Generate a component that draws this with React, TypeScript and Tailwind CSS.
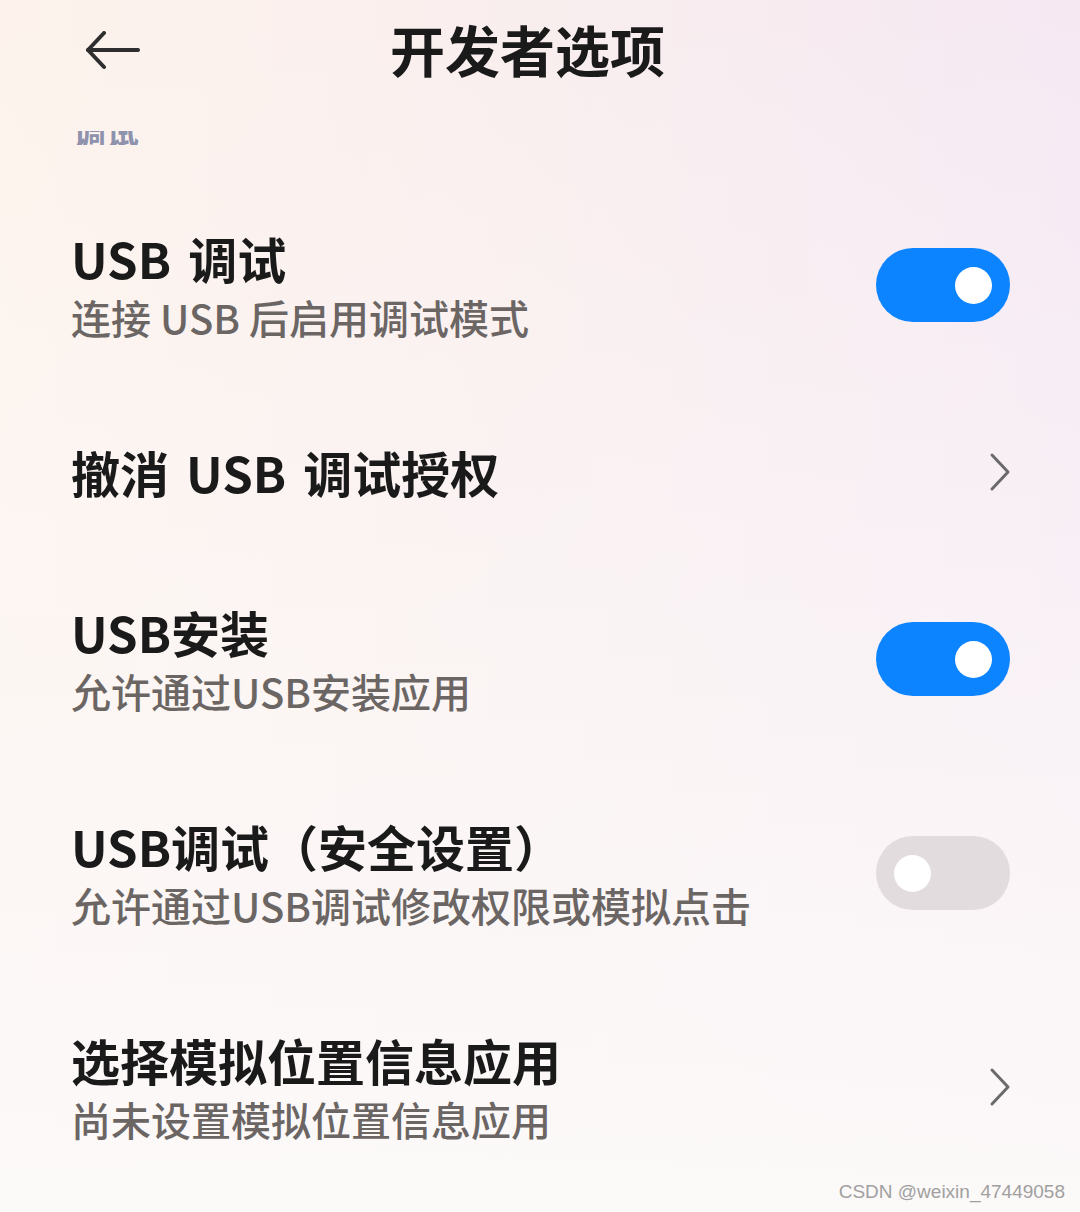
import React from "react";

const font = { fontFamily: '"Noto Sans CJK SC", "Noto Sans", sans-serif' };

function Toggle({ on }: { on: boolean }) {
  return (
    <div
      className={
        "flex h-[74px] w-[134px] shrink-0 items-center rounded-full px-[18px] " +
        (on ? "justify-end bg-[#0d84ff]" : "justify-start bg-[#e3dcdf]")
      }
    >
      <div className="h-[37px] w-[37px] rounded-full bg-white" />
    </div>
  );
}

function Chevron() {
  return (
    <svg width="24" height="40" viewBox="0 0 24 40" className="-mr-[1px] shrink-0">
      <path d="M5 3 L21 20 L5 37" fill="none" stroke="#6a6a6a" strokeWidth="3" strokeLinecap="round" strokeLinejoin="round" />
    </svg>
  );
}

function Row({
  title,
  sub,
  right,
  h,
}: {
  title: string;
  sub?: string;
  right: React.ReactNode;
  h: string;
}) {
  return (
    <div className={"flex items-center justify-between pl-[71px] pr-[70px] " + h}>
      <div className="flex flex-col">
        <div className="text-[49px] font-bold leading-[62px] text-[#1a1a1a] [word-spacing:6px]">{title}</div>
        {sub && (
          <div className="mt-[2px] text-[40px] font-medium leading-[52px] text-[#6b6664]">{sub}</div>
        )}
      </div>
      {right}
    </div>
  );
}

export default function App() {
  return (
    <div
      style={font}
      className="relative h-[1212px] w-[1080px] overflow-hidden bg-[linear-gradient(to_bottom,rgba(252,249,249,0)_0%,rgba(252,249,249,0.55)_55%,#fcf9f9_100%),linear-gradient(to_right,#fdf3ec_0%,#f9eeee_50%,#f5e8f3_100%)]"
    >
      <div className="flex h-[131px] items-start pt-[20px]">
        <div className="flex h-[60px] items-center pl-[84px] pt-[2px]">
          <svg width="58" height="40" viewBox="0 0 58 40">
            <path d="M54 19 L4 19" stroke="#2e2e2e" strokeWidth="4" strokeLinecap="round" fill="none" />
            <path d="M20 2 L4 19 L20 36" stroke="#2e2e2e" strokeWidth="4" strokeLinecap="round" strokeLinejoin="round" fill="none" />
          </svg>
        </div>
        <div className="-mt-[2px] ml-[248px] h-[60px] text-[55px] font-bold leading-[60px] text-[#1a1a1a]">开发者选项</div>
      </div>
      <div className="flex h-[14px] items-end overflow-hidden pl-[73px]">
        <div className="-mb-[3px] text-[33px] font-bold leading-[33px] text-[#8e92ad]">调试</div>
      </div>
      <div className="mt-[33px] flex flex-col">
        <Row h="h-[214px]" title="USB 调试" sub="连接 USB 后启用调试模式" right={<Toggle on />} />
        <Row h="h-[160px]" title="撤消 USB 调试授权" right={<Chevron />} />
        <Row h="h-[214px]" title="USB安装" sub="允许通过USB安装应用" right={<Toggle on />} />
        <Row h="h-[214px]" title="USB调试（安全设置）" sub="允许通过USB调试修改权限或模拟点击" right={<Toggle on={false} />} />
        <Row h="h-[214px]" title="选择模拟位置信息应用" sub="尚未设置模拟位置信息应用" right={<Chevron />} />
      </div>
      <div
        className="absolute bottom-[9px] right-[15px] text-[19px] leading-[22px] text-[#a0a0a0]"
        style={{ fontFamily: '"Liberation Sans", Arial, sans-serif' }}
      >
        CSDN @weixin_47449058
      </div>
    </div>
  );
}
